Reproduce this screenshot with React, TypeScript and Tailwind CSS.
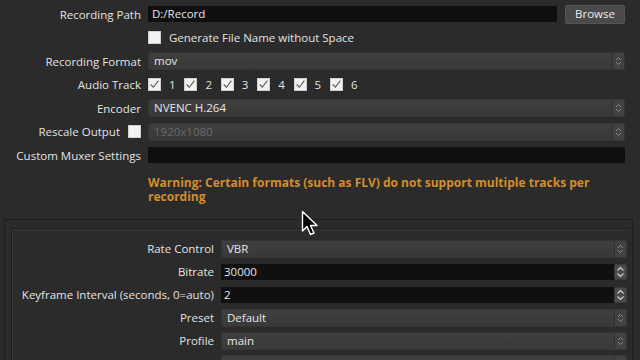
import React from 'react';

const font = { fontFamily: '"Open Sans", "Noto Sans", sans-serif' };

const UpDown = () => (
  <svg width="7" height="10" viewBox="0 0 7 10" className="text-[#8a8a8a]">
    <path d="M1 4 L3.5 1.5 L6 4" fill="none" stroke="currentColor" strokeWidth="1" />
    <path d="M1 6 L3.5 8.5 L6 6" fill="none" stroke="currentColor" strokeWidth="1" />
  </svg>
);

const Select = ({ value, disabled }: { value: string; disabled?: boolean }) => (
  <div className="flex-1 h-[18px] flex items-stretch rounded-[2px] bg-gradient-to-b from-[#3f3f3f] to-[#393939] border border-[#353535]">
    <span className={`flex-1 pl-[5px] leading-[16px] ${disabled ? 'text-[#6a6a6a]' : 'text-[#e6e6e6]'}`}>{value}</span>
    <span className="w-[12px] flex items-center justify-center border-l border-[#2f2f2f] bg-[#424242]">
      <UpDown />
    </span>
  </div>
);

const SpinBox = ({ value }: { value: string }) => (
  <div className="flex-1 h-[16px] flex items-stretch">
    <span className="flex-1 bg-[#101010] pl-[3px] leading-[16px] text-[#e6e6e6]">{value}</span>
    <span className="w-[13px] flex flex-col bg-[#4a4a4a] border border-[#3a3a3a] rounded-[2px]">
      <svg width="11" height="14" viewBox="0 0 11 14" className="text-[#d8d8d8]">
        <path d="M2.5 5.5 L5.5 2.5 L8.5 5.5" fill="none" stroke="currentColor" strokeWidth="1.1" />
        <path d="M2.5 8.5 L5.5 11.5 L8.5 8.5" fill="none" stroke="currentColor" strokeWidth="1.1" />
      </svg>
    </span>
  </div>
);

const Check = ({ checked }: { checked?: boolean }) => (
  <span className="w-[13px] h-[13px] bg-[#f2f2f2] border border-[#cfcfcf] flex items-center justify-center shrink-0">
    {checked && (
      <svg width="11" height="11" viewBox="0 0 10 10">
        <path d="M1.5 5 L4 7.5 L8.5 1.5" fill="none" stroke="#5a5a5a" strokeWidth="1" />
      </svg>
    )}
  </span>
);

const Row = ({ label, children }: { label?: React.ReactNode; children: React.ReactNode }) => (
  <div className="h-[23.5px] flex items-center">
    <div className="w-[141px] shrink-0 flex justify-end items-center">{label}</div>
    <div className="flex-1 flex items-center ml-[7px] mr-[15px]">{children}</div>
  </div>
);

const LowRow = ({ label, children }: { label: string; children: React.ReactNode }) => (
  <div className="h-[23px] flex items-center">
    <div className="w-[202px] shrink-0 text-right">{label}</div>
    <div className="flex-1 flex items-center ml-[7px] mr-[3px]">{children}</div>
  </div>
);

export default function App() {
  return (
    <div
      style={font}
      className="relative w-[640px] h-[360px] overflow-hidden bg-[#2b2b2b] text-[11.5px] text-[#e2e2e2]"
    >
      <div className="flex flex-col pt-[2.5px]">
        <Row label="Recording Path">
          <div className="flex-1 h-[16px] bg-[#0f0f0f] pl-[4px] leading-[16px] text-[#e6e6e6]">D:/Record</div>
          <button className="ml-[8px] w-[60px] h-[19px] bg-[#4a4a4a] border border-[#555] rounded-[2px] text-[#eaeaea] leading-[16px]">
            Browse
          </button>
        </Row>
        <Row>
          <Check />
          <span className="ml-[8px]">Generate File Name without Space</span>
        </Row>
        <Row label="Recording Format">
          <Select value="mov" />
        </Row>
        <Row label="Audio Track">
          {['1', '2', '3', '4', '5', '6'].map((n) => (
            <span key={n} className="w-[36.4px] flex items-center">
              <Check checked />
              <span className="ml-[8px]">{n}</span>
            </span>
          ))}
        </Row>
        <Row label="Encoder">
          <Select value="NVENC H.264" />
        </Row>
        <Row
          label={
            <>
              <span>Rescale Output</span>
              <span className="ml-[8px]">
                <Check />
              </span>
            </>
          }
        >
          <Select value="1920x1080" disabled />
        </Row>
        <Row label="Custom Muxer Settings">
          <div className="flex-1 h-[16px] bg-[#0f0f0f]" />
        </Row>
        <div className="ml-[148px] mt-[9px] w-[460px] text-[12px] font-bold text-[#d38d29] leading-[14px]">
          Warning: Certain formats (such as FLV) do not support multiple tracks per recording
        </div>
      </div>

      {/* lower settings frame */}
      <div className="absolute left-[4px] right-[7px] top-[219px] bottom-0 border-l border-t border-r border-[#1f1f1f]">
        <div className="absolute left-[6px] right-[2px] top-[8px] bottom-0 border-l border-t border-[#1c1c1c] shadow-[inset_1px_1px_0_#383838]">
          <div className="flex flex-col pt-[8px]">
            <LowRow label="Rate Control">
              <Select value="VBR" />
            </LowRow>
            <LowRow label="Bitrate">
              <SpinBox value="30000" />
            </LowRow>
            <LowRow label="Keyframe Interval (seconds, 0=auto)">
              <SpinBox value="2" />
            </LowRow>
            <LowRow label="Preset">
              <Select value="Default" />
            </LowRow>
            <LowRow label="Profile">
              <Select value="main" />
            </LowRow>
            <LowRow label="Level">
              <Select value="auto" />
            </LowRow>
          </div>
        </div>
      </div>

      {/* mouse pointer */}
      <svg className="absolute left-[301px] top-[210px]" width="20" height="28" viewBox="0 0 20 28">
        <path
          d="M1.5 1.5 L1.5 21 L6 16.5 L9.5 24.5 L13 23 L9.5 15.5 L16 15.5 Z"
          fill="#000"
          stroke="#fff"
          strokeWidth="1.4"
          strokeLinejoin="round"
        />
      </svg>
    </div>
  );
}
